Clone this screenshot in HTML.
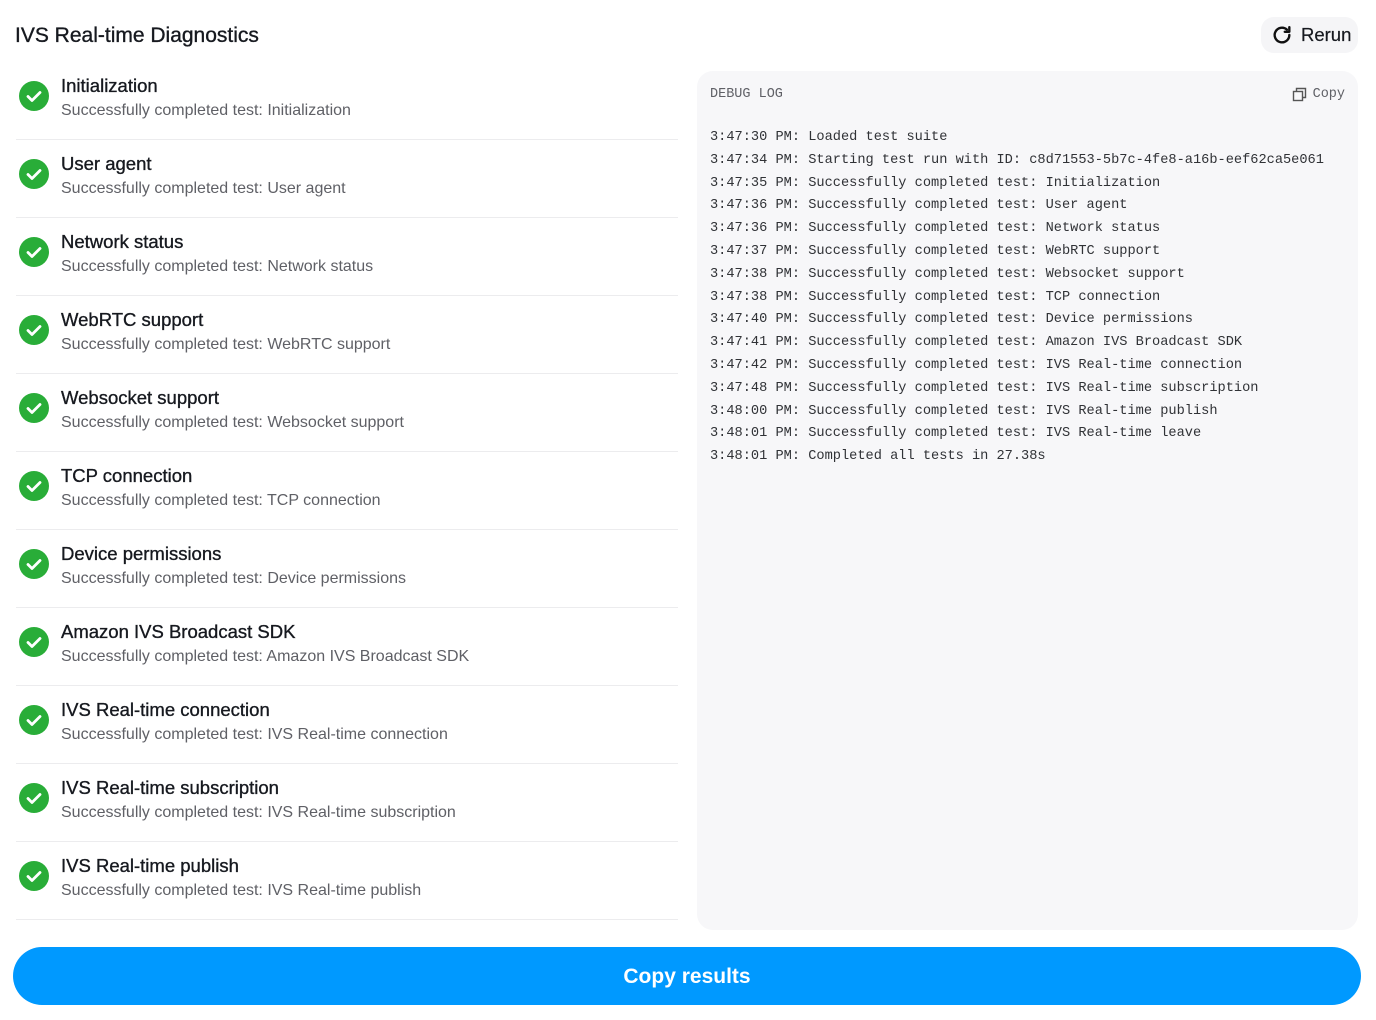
<!DOCTYPE html>
<html><head><meta charset="utf-8"><style>
*{margin:0;padding:0;box-sizing:border-box}
html,body{width:1376px;height:1020px;background:#fff;overflow:hidden;font-family:"Liberation Sans",sans-serif;color:#16191f}
.title{position:absolute;left:15px;top:24px;font-size:21px;-webkit-text-stroke:0.35px #16191f}
.rerun{position:absolute;left:1261px;top:17px;width:97px;height:36px;background:#f5f5f7;border-radius:13px;display:flex;align-items:center;padding-left:10px;font-size:18.5px;-webkit-text-stroke:0.2px #16191f}
.rerun svg{margin-right:8px}
.list{position:absolute;left:16px;top:62px;width:662px}
.row{height:78px;border-bottom:1px solid #ececee;position:relative}
.row svg{position:absolute;left:2px;top:18px}
.row .t{position:absolute;left:45px;top:13px;font-size:18.5px;-webkit-text-stroke:0.35px #16191f}
.row .s{position:absolute;left:45px;top:40px;font-size:16px;color:#5f6066}
.panel{position:absolute;left:697px;top:71px;width:661px;height:859px;background:#f7f7f9;border-radius:16px}
.mono{font-family:"Liberation Mono",monospace}
.dl{position:absolute;left:13px;top:16px;font-size:13.5px;color:#5f6066}
.cp{position:absolute;right:13px;top:16px;font-size:13.5px;color:#5f6066;display:flex;align-items:center}
.cp svg{margin-right:6px}
.log{position:absolute;left:13px;top:56px;font-size:13.65px;line-height:22.8px;color:#303236;white-space:pre}
.btn{position:absolute;left:13px;top:947px;width:1348px;height:58px;background:#0099ff;border-radius:29px;color:#fff;font-weight:bold;font-size:21px;display:flex;align-items:center;justify-content:center;padding-top:2px}
</style></head><body>
<div class="title">IVS Real-time Diagnostics</div>
<div class="rerun"><svg width="22" height="22" viewBox="0 0 24 24" fill="none" stroke="#111" stroke-width="2.6" stroke-linecap="round" stroke-linejoin="round"><path d="M20 12a8 8 0 1 1-2.6-5.9"/><path d="M20 3.5v5h-5"/></svg>Rerun</div>
<div class="list">
<div class="row"><svg width="32" height="32" viewBox="0 0 32 32"><circle cx="16" cy="16" r="15" fill="#29ad38"/><path d="M10 16.5l4 4 8-8" fill="none" stroke="#fff" stroke-width="2.8" stroke-linecap="round" stroke-linejoin="round"/></svg><div class="t">Initialization</div><div class="s">Successfully completed test: Initialization</div></div>
<div class="row"><svg width="32" height="32" viewBox="0 0 32 32"><circle cx="16" cy="16" r="15" fill="#29ad38"/><path d="M10 16.5l4 4 8-8" fill="none" stroke="#fff" stroke-width="2.8" stroke-linecap="round" stroke-linejoin="round"/></svg><div class="t">User agent</div><div class="s">Successfully completed test: User agent</div></div>
<div class="row"><svg width="32" height="32" viewBox="0 0 32 32"><circle cx="16" cy="16" r="15" fill="#29ad38"/><path d="M10 16.5l4 4 8-8" fill="none" stroke="#fff" stroke-width="2.8" stroke-linecap="round" stroke-linejoin="round"/></svg><div class="t">Network status</div><div class="s">Successfully completed test: Network status</div></div>
<div class="row"><svg width="32" height="32" viewBox="0 0 32 32"><circle cx="16" cy="16" r="15" fill="#29ad38"/><path d="M10 16.5l4 4 8-8" fill="none" stroke="#fff" stroke-width="2.8" stroke-linecap="round" stroke-linejoin="round"/></svg><div class="t">WebRTC support</div><div class="s">Successfully completed test: WebRTC support</div></div>
<div class="row"><svg width="32" height="32" viewBox="0 0 32 32"><circle cx="16" cy="16" r="15" fill="#29ad38"/><path d="M10 16.5l4 4 8-8" fill="none" stroke="#fff" stroke-width="2.8" stroke-linecap="round" stroke-linejoin="round"/></svg><div class="t">Websocket support</div><div class="s">Successfully completed test: Websocket support</div></div>
<div class="row"><svg width="32" height="32" viewBox="0 0 32 32"><circle cx="16" cy="16" r="15" fill="#29ad38"/><path d="M10 16.5l4 4 8-8" fill="none" stroke="#fff" stroke-width="2.8" stroke-linecap="round" stroke-linejoin="round"/></svg><div class="t">TCP connection</div><div class="s">Successfully completed test: TCP connection</div></div>
<div class="row"><svg width="32" height="32" viewBox="0 0 32 32"><circle cx="16" cy="16" r="15" fill="#29ad38"/><path d="M10 16.5l4 4 8-8" fill="none" stroke="#fff" stroke-width="2.8" stroke-linecap="round" stroke-linejoin="round"/></svg><div class="t">Device permissions</div><div class="s">Successfully completed test: Device permissions</div></div>
<div class="row"><svg width="32" height="32" viewBox="0 0 32 32"><circle cx="16" cy="16" r="15" fill="#29ad38"/><path d="M10 16.5l4 4 8-8" fill="none" stroke="#fff" stroke-width="2.8" stroke-linecap="round" stroke-linejoin="round"/></svg><div class="t">Amazon IVS Broadcast SDK</div><div class="s">Successfully completed test: Amazon IVS Broadcast SDK</div></div>
<div class="row"><svg width="32" height="32" viewBox="0 0 32 32"><circle cx="16" cy="16" r="15" fill="#29ad38"/><path d="M10 16.5l4 4 8-8" fill="none" stroke="#fff" stroke-width="2.8" stroke-linecap="round" stroke-linejoin="round"/></svg><div class="t">IVS Real-time connection</div><div class="s">Successfully completed test: IVS Real-time connection</div></div>
<div class="row"><svg width="32" height="32" viewBox="0 0 32 32"><circle cx="16" cy="16" r="15" fill="#29ad38"/><path d="M10 16.5l4 4 8-8" fill="none" stroke="#fff" stroke-width="2.8" stroke-linecap="round" stroke-linejoin="round"/></svg><div class="t">IVS Real-time subscription</div><div class="s">Successfully completed test: IVS Real-time subscription</div></div>
<div class="row"><svg width="32" height="32" viewBox="0 0 32 32"><circle cx="16" cy="16" r="15" fill="#29ad38"/><path d="M10 16.5l4 4 8-8" fill="none" stroke="#fff" stroke-width="2.8" stroke-linecap="round" stroke-linejoin="round"/></svg><div class="t">IVS Real-time publish</div><div class="s">Successfully completed test: IVS Real-time publish</div></div>
</div>
<div class="panel">
<div class="dl mono">DEBUG LOG</div>
<div class="cp mono"><svg width="15" height="15" viewBox="0 0 15 15" fill="none" stroke="#555" stroke-width="1.4"><rect x="1.5" y="4.5" width="9" height="9"/><path d="M4.5 4.5V1.5h9v9h-3"/></svg>Copy</div>
<div class="log mono">3:47:30 PM: Loaded test suite
3:47:34 PM: Starting test run with ID: c8d71553-5b7c-4fe8-a16b-eef62ca5e061
3:47:35 PM: Successfully completed test: Initialization
3:47:36 PM: Successfully completed test: User agent
3:47:36 PM: Successfully completed test: Network status
3:47:37 PM: Successfully completed test: WebRTC support
3:47:38 PM: Successfully completed test: Websocket support
3:47:38 PM: Successfully completed test: TCP connection
3:47:40 PM: Successfully completed test: Device permissions
3:47:41 PM: Successfully completed test: Amazon IVS Broadcast SDK
3:47:42 PM: Successfully completed test: IVS Real-time connection
3:47:48 PM: Successfully completed test: IVS Real-time subscription
3:48:00 PM: Successfully completed test: IVS Real-time publish
3:48:01 PM: Successfully completed test: IVS Real-time leave
3:48:01 PM: Completed all tests in 27.38s</div>
</div>
<div class="btn">Copy results</div>
</body></html>
